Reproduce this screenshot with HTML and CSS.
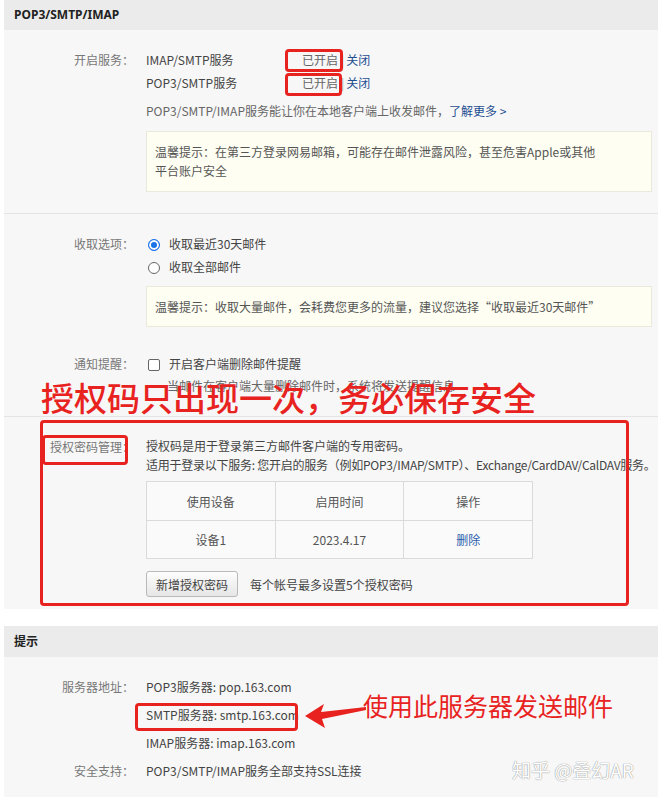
FILE: index.html
```html
<!DOCTYPE html>
<html lang="zh-CN">

<head>
    <meta charset="UTF-8">
    <meta name="viewport" content="width=device-width, initial-scale=1.0">
    <title>POP3/SMTP/IMAP 设置</title>
    <link rel="stylesheet" href="styles.css">
</head>

<body>
    <div class="page">

        <div class="panel-head">POP3/SMTP/IMAP</div>
        <div class="panel">

            <div class="sec sec-service">
                <div class="row">
                    <div class="label">开启服务：</div>
                    <div class="field">
                        <div class="line"><span class="svc">IMAP/SMTP服务</span><span class="state">已开启</span><span class="bar">|</span><a class="link">关闭</a></div>
                        <div class="line"><span class="svc">POP3/SMTP服务</span><span class="state">已开启</span><span class="bar">|</span><a class="link">关闭</a></div>
                        <div class="line desc">POP3/SMTP/IMAP服务能让你在本地客户端上收发邮件，<a class="link">了解更多 &gt;</a></div>
                        <div class="tip tip-two">温馨提示：在第三方登录网易邮箱，可能存在邮件泄露风险，甚至危害Apple或其他<br>平台账户安全</div>
                    </div>
                </div>
            </div>

            <div class="sec sec-fetch">
                <div class="row">
                    <div class="label">收取选项：</div>
                    <div class="field">
                        <div class="line"><span class="radio checked"></span>收取最近30天邮件</div>
                        <div class="line"><span class="radio"></span>收取全部邮件</div>
                        <div class="tip tip-one">温馨提示：收取大量邮件，会耗费您更多的流量，建议您选择“收取最近30天邮件”</div>
                    </div>
                </div>
                <div class="row row-notify">
                    <div class="label">通知提醒：</div>
                    <div class="field">
                        <div class="line"><span class="check"></span>开启客户端删除邮件提醒</div>
                        <div class="line sub">当邮件在客户端大量删除邮件时，系统将发送提醒信息</div>
                    </div>
                </div>
            </div>

            <div class="sec sec-auth">
                <div class="row">
                    <div class="label label-small">授权密码管理：</div>
                    <div class="field">
                        <div class="line small">授权码是用于登录第三方邮件客户端的专用密码。</div>
                        <div class="line small tight">适用于登录以下服务: 您开启的服务（例如POP3/IMAP/SMTP）、Exchange/CardDAV/CalDAV服务。</div>
                        <table class="codes">
                            <tr>
                                <th>使用设备</th>
                                <th>启用时间</th>
                                <th>操作</th>
                            </tr>
                            <tr>
                                <td>设备1</td>
                                <td>2023.4.17</td>
                                <td><a class="link del">删除</a></td>
                            </tr>
                        </table>
                        <div class="add-row">
                            <button class="btn">新增授权密码</button>
                            <span>每个帐号最多设置5个授权密码</span>
                        </div>
                    </div>
                </div>
            </div>
        </div>

        <div class="panel-head panel-head-2">提示</div>
        <div class="panel panel-last">
            <div class="sec sec-hint">
                <div class="row">
                    <div class="label">服务器地址：</div>
                    <div class="field">
                        <div class="line">POP3服务器: pop.163.com</div>
                        <div class="line">SMTP服务器: smtp.163.com</div>
                        <div class="line">IMAP服务器: imap.163.com</div>
                    </div>
                </div>
                <div class="row">
                    <div class="label">安全支持：</div>
                    <div class="field">
                        <div class="line">POP3/SMTP/IMAP服务全部支持SSL连接</div>
                    </div>
                </div>
            </div>
        </div>

        <!-- annotations drawn on top of the screenshot -->
        <div class="mark mark-on1"></div>
        <div class="mark mark-on2"></div>
        <div class="note-big">授权码只出现一次，务必保存安全</div>
        <div class="mark mark-auth"></div>
        <div class="mark mark-label"></div>
        <div class="mark mark-smtp"></div>
        <svg class="arrow" width="70" height="30" viewBox="0 0 70 30">
            <polygon points="7,16 26,4 23,12 68,7 68,10 24,19 27,28" fill="#e8231f" />
        </svg>
        <div class="note-send">使用此服务器发送邮件</div>
        <div class="watermark">知乎 @叠幻AR</div>
    </div>
</body>

</html>
```

FILE: styles.css
```css
* {
    margin: 0;
    padding: 0;
    box-sizing: border-box;
}

body {
    background: #fff;
    font-family: "Noto Sans CJK SC", sans-serif;
    font-size: 12px;
    color: #444;
}

.page {
    position: relative;
    width: 658px;
    height: 798px;
    overflow: hidden;
    padding-left: 4px;
}

.panel-head {
    height: 30px;
    line-height: 30px;
    padding-left: 10px;
    background: #ebebeb;
    font-family: "Noto Sans", "Noto Sans CJK SC", sans-serif;
    font-weight: bold;
    color: #222;
    font-size: 12px;
}

.panel-head-2 {
    height: 31px;
    line-height: 31px;
    margin-top: 17px;
}

.panel {
    background: #f7f7f7;
}

.panel-last {
    height: 140px;
}

.sec {
    border-bottom: 1px solid #e4e4e4;
}

.sec-service {
    padding: 18px 0 21px;
}

.sec-fetch {
    padding: 18px 0 19px;
}

.sec-auth {
    padding: 19px 0 12px;
    border-bottom: none;
}

.sec-hint {
    padding-top: 16px;
    border-bottom: none;
}

.row {
    display: flex;
}

.label {
    width: 130px;
    flex: none;
    text-align: right;
    color: #777;
    line-height: 23px;
}

.sec-hint .label {
    line-height: 28px;
}

.label-small {
    line-height: 19px;
    padding-top: 1px;
}

.field {
    flex: 1;
    margin-left: 12px;
    margin-right: 6px;
    min-width: 0;
}

.line {
    line-height: 23px;
    white-space: nowrap;
}

.sec-hint .line {
    line-height: 28px;
}

.line.small {
    line-height: 19px;
}

.line.tight {
    letter-spacing: -0.25px;
}

.line.desc {
    margin-top: 5px;
    color: #666;
}

.line.sub {
    line-height: 22px;
    padding-left: 21px;
    color: #666;
}

.svc {
    display: inline-block;
    width: 156px;
}

.state {
    color: #666;
}

.bar {
    color: #999;
    margin: 0 2px 0 3px;
}

.link {
    color: #1f4f92;
    cursor: pointer;
}

.tip {
    background: #fefef2;
    border: 1px solid #e9e9dc;
    color: #555;
    line-height: 19px;
    padding: 10px 8px 11px;
}

.tip-two {
    margin-top: 9px;
}

.tip-one {
    margin-top: 8px;
    padding: 10px 8px 10px;
}

.row-notify {
    margin-top: 25px;
}

.radio,
.check {
    display: inline-block;
    width: 12px;
    height: 12px;
    margin: 0 9px 0 2px;
    vertical-align: -2px;
    border: 1px solid #666;
    background: #fff;
}

.radio {
    border-radius: 50%;
}

.radio.checked {
    border-color: #1a73e8;
    box-shadow: inset 0 0 0 2px #fff;
    background: #1a73e8;
}

.check {
    border-radius: 2px;
}

.codes {
    margin-top: 7px;
    width: 387px;
    border-collapse: collapse;
    background: #fafafa;
}

.codes th,
.codes td {
    border: 1px solid #dadada;
    width: 129px;
    text-align: center;
    font-weight: normal;
    color: #555;
}

.codes th {
    height: 39px;
}

.codes td {
    height: 38px;
}

.del {
    color: #2b5eac;
}

.add-row {
    margin-top: 12px;
    display: flex;
    align-items: center;
}

.btn {
    width: 92px;
    height: 26px;
    font-family: inherit;
    font-size: 12px;
    color: #444;
    border: 1px solid #b9b9b9;
    border-radius: 3px;
    background: linear-gradient(#fdfdfd, #e6e6e6);
    margin-right: 12px;
}

.add-row span {
    color: #444;
}

/* red annotations */
.mark {
    position: absolute;
    border: 3px solid #e8231f;
    border-radius: 4px;
}

.mark-on1 {
    left: 285px;
    top: 49px;
    width: 58px;
    height: 23px;
}

.mark-on2 {
    left: 285px;
    top: 73px;
    width: 57px;
    height: 23px;
}

.mark-auth {
    left: 40px;
    top: 420px;
    width: 589px;
    height: 186px;
}

.mark-label {
    left: 42px;
    top: 435px;
    width: 86px;
    height: 30px;
}

.mark-smtp {
    left: 135px;
    top: 703px;
    width: 163px;
    height: 28px;
}

.note-big {
    position: absolute;
    left: 41px;
    top: 378px;
    font-size: 33px;
    font-weight: 500;
    line-height: 38px;
    color: #e8231f;
    white-space: nowrap;
}

.arrow {
    position: absolute;
    left: 298px;
    top: 700px;
}

.note-send {
    position: absolute;
    left: 363px;
    top: 689px;
    font-size: 25px;
    line-height: 32px;
    color: #e8231f;
    white-space: nowrap;
}

.watermark {
    position: absolute;
    left: 512px;
    top: 757px;
    font-size: 19px;
    line-height: 26px;
    color: #fff;
    text-shadow: 0 0 1px #999, 0 0 1px #999;
    white-space: nowrap;
}
```
